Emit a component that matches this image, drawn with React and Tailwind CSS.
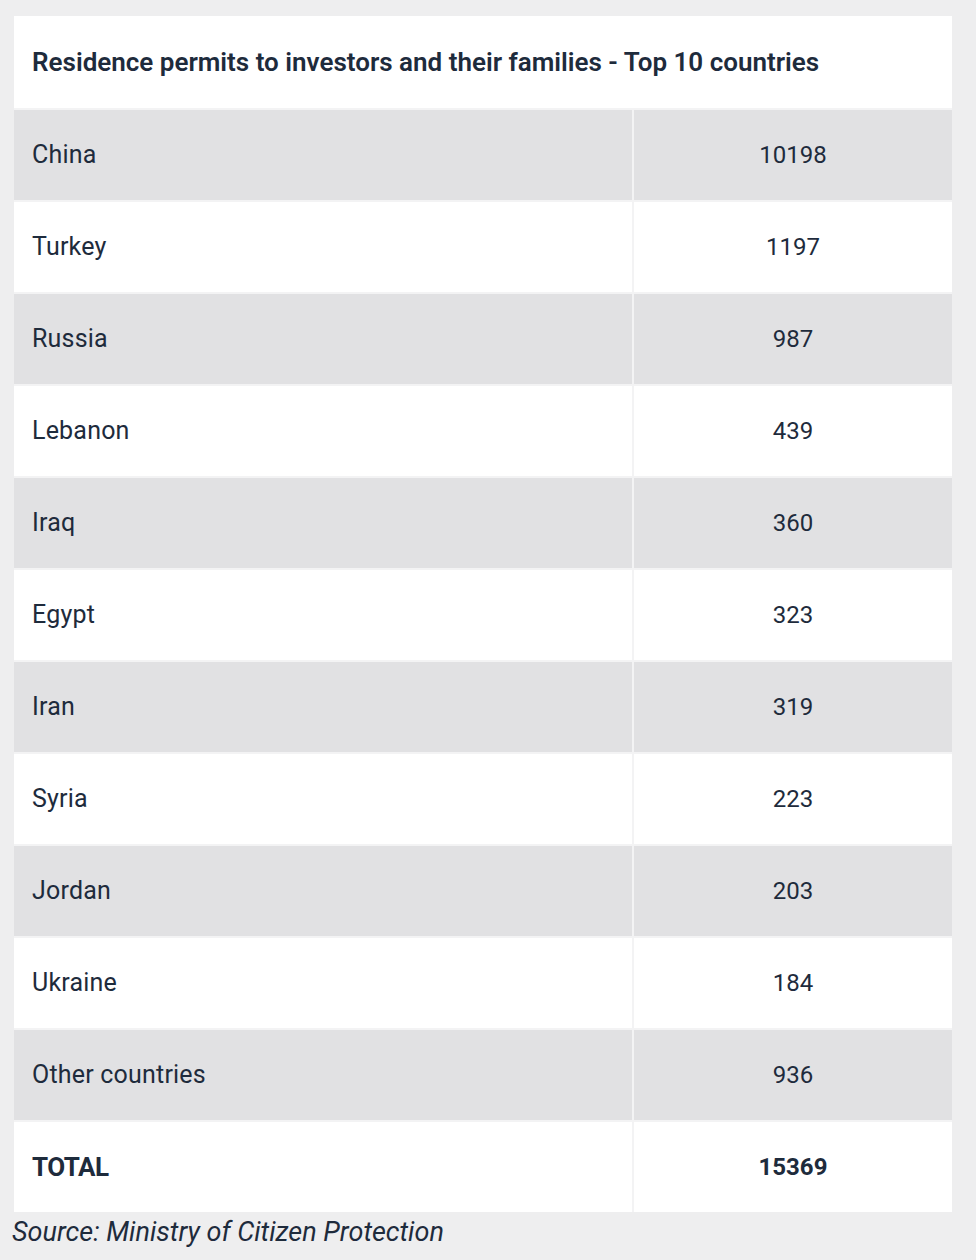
import React from "react";

const rows = [
  ["China", "10198"],
  ["Turkey", "1197"],
  ["Russia", "987"],
  ["Lebanon", "439"],
  ["Iraq", "360"],
  ["Egypt", "323"],
  ["Iran", "319"],
  ["Syria", "223"],
  ["Jordan", "203"],
  ["Ukraine", "184"],
  ["Other countries", "936"],
];

const App = () => {
  return (
    <div className="min-h-[1260px] bg-[#eeeeef] pt-4 font-['Roboto',sans-serif] text-[#1e2b3c]">
      <div className="ml-[14px] w-[938px]">
        <div className="flex h-[92px] items-center bg-white px-[18px]">
          <h1 className="text-[26px] font-semibold tracking-[0px]">
            Residence permits to investors and their families - Top 10 countries
          </h1>
        </div>

        {rows.map(([country, count], i) => (
          <div
            key={country}
            className={`flex h-[92px] border-t-2 border-[#f3f3f4] ${
              i % 2 === 0 ? "bg-[#e1e1e3]" : "bg-white"
            }`}
          >
            <div className="flex w-[620px] items-center border-r-2 border-[#f3f3f4] px-[18px] text-[25px] tracking-[0.2px]">
              {country}
            </div>
            <div className="flex flex-1 items-center justify-center text-[24px]">
              {count}
            </div>
          </div>
        ))}

        <div className="flex h-[92px] border-t-2 border-[#f3f3f4] bg-white font-bold">
          <div className="flex w-[620px] items-center border-r-2 border-[#f3f3f4] px-[18px] text-[26px] tracking-[-0.5px]">
            TOTAL
          </div>
          <div className="flex flex-1 items-center justify-center text-[24px]">
            15369
          </div>
        </div>
      </div>

      <p className="ml-[12px] mt-[2px] text-[27px] italic leading-[36px]">
        Source: Ministry of Citizen Protection
      </p>
    </div>
  );
};

export default App;
